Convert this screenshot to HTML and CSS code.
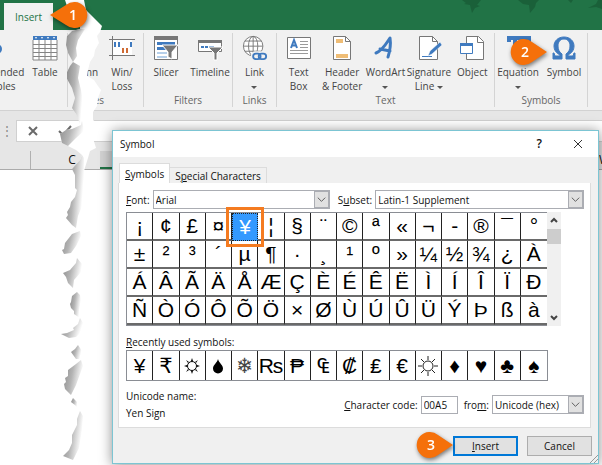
FILE: index.html
```html
<!DOCTYPE html>
<html lang="en">
<head>
    <meta charset="UTF-8">
    <meta name="viewport" content="width=device-width, initial-scale=1.0">
    <title>Insert Symbol</title>
    <link rel="stylesheet" href="styles.css">
</head>
<body>
    <div class="app">
        <header class="title-bar">
            <button class="ribbon-tab">Insert</button>
            <svg class="leaves" width="150" height="16" viewBox="0 0 150 16">
                <path d="M10 0l4 3-2 1 6 1 2 8 3-5 5-2-3-1 4-5zM66 0l5 4 6 1 1 8 5-6 1-4 3-3zM116 0l3 3 2-3zM136 8l8-4 2-4h4v9l-6-2z"/>
            </svg>
        </header>

        <div class="ribbon">
            <div class="ribbon-left">
                <div class="group tables">
                    <div class="tools">
                        <button class="tool wide">
                            <svg width="26" height="26" viewBox="0 0 26 26"><circle cx="21" cy="14" r="5" fill="#3f7abf"/></svg>
                            <span>Recommended<br>PivotTables</span>
                        </button>
                        <button class="tool">
                            <svg width="26" height="26" viewBox="0 0 26 26">
                                <path d="M1 1h24v24H1z" fill="#fff"/>
                                <path d="M1 1h24v4H1z" fill="#3f7abf"/>
                                <path d="M1 5v20h24V5M1 9.500h24M1 13.500h24M1 17.500h24M1 21.500h24M7 5v20M13 5v20M19 5v20" fill="none" stroke="#858585"/>
                                <path d="M3 2h2l-1 2zM9 2h2l-1 2zM15 2h2l-1 2zM21 2h2l-1 2z" fill="#fff"/>
                            </svg>
                            <span>Table</span>
                        </button>
                    </div>
                </div>
            </div>
            <div class="ribbon-right">
                <div class="group sparklines">
                    <div class="tools">
                        <button class="tool"><svg width="26" height="26"></svg><span>Column</span></button>
                        <button class="tool">
                            <svg width="26" height="26" viewBox="0 0 26 26">
                                <path d="M4 5h19v15H4z" fill="#fff"/>
                                <path d="M3.500 1v24M0 4.500h26M0 20.500h26" stroke="#777" fill="none"/>
                                <path d="M5 7h2v5H5zM9 7h2v5H9zM21 7h2v5h-2z" fill="#3f7abf"/>
                                <path d="M13 13h2v5h-2zM17 13h2v5h-2z" fill="#cf6a33"/>
                            </svg>
                            <span>Win/<br>Loss</span>
                        </button>
                    </div>
                    <div class="group-name">Sparklines</div>
                </div>
                <div class="group filters">
                    <div class="tools">
                        <button class="tool">
                            <svg width="26" height="26" viewBox="0 0 26 26">
                                <path d="M1.500 1.500h23v23h-23z" fill="#fff" stroke="#777"/>
                                <path d="M1 1h24v4H1z" fill="#777"/>
                                <path d="M4 7h18v3H4zM4 12h9v3H4z" fill="#3f7abf"/>
                                <path d="M4 17h10v2H4zM4 21h10v2H4z" fill="#b5cfea"/>
                                <path d="M9 10h16l-6 7v7l-4-2v-5z" fill="#777" stroke="#fff"/>
                            </svg>
                            <span>Slicer</span>
                        </button>
                        <button class="tool">
                            <svg width="26" height="26" viewBox="0 0 26 26">
                                <path d="M1.500 5.500h23v11h-23z" fill="#fff" stroke="#777"/>
                                <path d="M1 5h24v3H1z" fill="#777"/>
                                <path d="M4 11h3v2H4zM8 11h3v2H8zM12 11h5v2h-5z" fill="#3f7abf"/>
                                <path d="M11 12h15l-6 6v7h-3v-7z" fill="#777" stroke="#fff"/>
                            </svg>
                            <span>Timeline</span>
                        </button>
                    </div>
                    <div class="group-name">Filters</div>
                </div>
                <div class="group links">
                    <div class="tools">
                        <button class="tool">
                            <svg width="28" height="28" viewBox="0 0 28 28">
                                <g fill="none" stroke="#777">
                                    <circle cx="12" cy="12" r="10.500" fill="#fff"/>
                                    <ellipse cx="12" cy="12" rx="5" ry="10.500"/>
                                    <path d="M12 1.500v21M1.500 12h21M3 6.500h18M3 17.500h18"/>
                                </g>
                                <g fill="none" stroke="#f1f1f1" stroke-width="5"><rect x="12" y="20" width="8" height="5" rx="2.500"/><rect x="18" y="20" width="8" height="5" rx="2.500"/></g>
                                <g fill="none" stroke="#3f7abf" stroke-width="2"><rect x="12" y="20" width="8" height="6" rx="3"/><rect x="18" y="20" width="8" height="6" rx="3"/></g>
                            </svg>
                            <span>Link<br><i class="caret"></i></span>
                        </button>
                    </div>
                    <div class="group-name">Links</div>
                </div>
                <div class="group text">
                    <div class="tools">
                        <button class="tool">
                            <svg width="26" height="26" viewBox="0 0 26 26">
                                <path d="M1.500 2.500h23v21h-23z" fill="#fff" stroke="#777"/>
                                <path d="M14 6.500h8M14 9.500h8M14 12.500h8M4 15.500h18M4 18.500h18" stroke="#9a9a9a"/>
                                <path d="M5 13l3-8 3 8M6 10.500h4" fill="none" stroke="#3f7abf" stroke-width="2"/>
                            </svg>
                            <span>Text<br>Box</span>
                        </button>
                        <button class="tool">
                            <svg width="26" height="26" viewBox="0 0 26 26">
                                <path d="M4.500 1.500h12l5 5v18h-17z" fill="#fff" stroke="#777"/>
                                <path d="M16.500 1.500v5h5" fill="none" stroke="#777"/>
                                <path d="M7 4h7v4H7zM7 19h12v4H7z" fill="#efbd76"/>
                            </svg>
                            <span>Header<br>&amp; Footer</span>
                        </button>
                        <button class="tool">
                            <svg width="26" height="26" viewBox="0 0 26 26">
                                <path d="M4 18C10 16 14 9 18 3c1 7 0 13-2 19M8 14l10 2" fill="none" stroke="#3f7abf" stroke-width="3" stroke-linecap="round" stroke-linejoin="round"/>
                            </svg>
                            <span>WordArt<br><i class="caret"></i></span>
                        </button>
                        <button class="tool">
                            <svg width="26" height="26" viewBox="0 0 26 26">
                                <path d="M3.500 1.500h13l5 5v18h-18z" fill="#fff" stroke="#777"/>
                                <path d="M16.500 1.500v5h5" fill="none" stroke="#777"/>
                                <path d="M6 21.500h10" stroke="#3f7abf"/>
                                <path d="M12 21l2-5L24 7l2 3-10 9z" fill="#3f7abf" stroke="#fff" stroke-width=".5"/>
                            </svg>
                            <span>Signature<br>Line <i class="caret"></i></span>
                        </button>
                        <button class="tool">
                            <svg width="26" height="26" viewBox="0 0 26 26">
                                <path d="M7.500 1.500h12l5 5v18h-17z" fill="#fff" stroke="#777"/>
                                <path d="M18.500 1.500v6h6" fill="none" stroke="#777"/>
                                <path d="M1.500 8.500h12v10h-12z" fill="#fff" stroke="#3f7abf"/>
                                <path d="M1 8h13v3H1z" fill="#3f7abf"/>
                            </svg>
                            <span>Object</span>
                        </button>
                    </div>
                    <div class="group-name">Text</div>
                </div>
                <div class="group symbols">
                    <div class="tools">
                        <button class="tool">
                            <svg width="26" height="26" viewBox="0 0 26 26"><path d="M4 7V3h21v4M10 3v20M19 3v20" fill="none" stroke="#3f7abf" stroke-width="4"/></svg>
                            <span>Equation<br><i class="caret"></i></span>
                        </button>
                        <button class="tool">
                            <svg width="26" height="26" viewBox="0 0 26 26">
                                <path d="M2 18h1l1 3h5v-1C5 18 3 15 3 11 3 6 7 2 13 2s10 4 10 9c0 4-2 7-6 9v1h5l1-3h1v6h-9v-5c3-2 4-5 4-8 0-4-2-7-6-7s-6 3-6 7c0 3 1 6 4 8v5H2z" fill="#3f7abf" stroke="#3f7abf"/>
                            </svg>
                            <span>Symbol</span>
                        </button>
                    </div>
                    <div class="group-name">Symbols</div>
                    <svg class="callout callout-two" width="42" height="34" viewBox="0 0 42 34">
                        <path d="M38 16L23 6A13 13 0 1 0 23 26z"/>
                        <text x="16" y="21">2</text>
                    </svg>
                </div>
            </div>
        </div>

        <div class="formula-row">
            <span class="grip">⋮</span>
            <div class="formula-box">
                <svg width="60" height="14" viewBox="0 0 60 14" fill="none" stroke="#6a6a6a" stroke-width="2">
                    <path d="M2 3l8 8M10 3l-8 8M32 7l4 4 8-9"/>
                </svg>
            </div>
        </div>

        <div class="columns">
            <span class="col-b"></span>
            <span class="col-c">C</span>
            <span class="col-d"></span>
            <span class="col-rest">W</span>
        </div>
        <main class="sheet"></main>

        <svg class="tear" width="110" height="465" viewBox="0 0 110 465">
            <defs>
                <linearGradient id="shade" x1="0" y1="0" x2="1" y2=".3">
                    <stop offset="0" stop-color="#8c8c8c"/>
                    <stop offset=".5" stop-color="#b4b4b4"/>
                    <stop offset="1" stop-color="#fff"/>
                </linearGradient>
            </defs>
            <path fill="#fff" d="M65 0L67 6 72 10 80 12 80 29 72 31 67 36 66 45 68 53 73 62 70 66 67 72 67 79 72 88 75 98 72 108 76 114 81 124 72 129 66 130 60 134 62 143 76 150 82 155 80 160 72 169 84 171 88 158 90 151 96 148 93 138 105 131 104 128 93 120 93 112 97 106 98 98 101 90 98 86 94 80 87 76 88 70 90 62 94 56 95 50 99 43 97 36 100 32 102 26 94 18 86 10 84 0z"/>
            <g fill="url(#shade)">
                <path d="M80 29L72 31 67 36 66 45 68 53 73 62 77 56 76 48 78 40 85 29z"/>
                <path d="M73 62L70 66 67 72 67 79 72 88 75 98 72 108 76 114 80 124 84 118 83 102 81 90 78 78 80 66z"/>
                <path d="M82 121L81 125 72 129 66 130 60 134 62 143 68 146 76 138 84 131z"/>
                <path d="M82 155L80 160 72 169 75 175 75 188 77 190 75 197 71 202 70 207 67 212 68 215 66 218 72 225 76 228 78 216 83 204 84 180 84 158z"/>
                <path d="M80 231L72 234 65 243 64 249 62 250 64 254 71 253 76 246 81 236z"/>
                <path d="M77 258L76 263 70 270 63 273 66 277 68 283 73 288 74 280 81 272 82 264z"/>
                <path d="M77 292L72 296 71 302 70 304 71 308 74 311 74 314 80 318 79 310 81 301 80 295z"/>
                <path d="M80 318L78 324 73 328 74 330 67 333 61 334 69 338 76 337 82 331 83 323z"/>
                <path d="M78 345L75 349 71 352 76 359 80 359 82 351z"/>
                <path d="M81 360L76 364 68 370 68 376 65 378 66 382 64 384 65 389 71 395 76 385 80 374 83 366z"/>
                <path d="M73 398L71 402 75 405 78 408 77 402z"/>
                <path d="M80 411L77 419 77 425 72 435 72 443 69 450 63 456 73 460 79 448 82 430 83 416z"/>
            </g>
        </svg>
        <svg class="callout callout-one" width="42" height="34" viewBox="0 0 42 34">
            <path d="M2 16L18 6A13 13 0 1 1 18 26z"/>
            <text x="25" y="21">1</text>
        </svg>
    </div>

    <section class="dialog">
        <div class="dialog-title">
            <h1>Symbol</h1>
            <button class="help">?</button>
            <button class="close" aria-label="Close">
                <svg width="10" height="10" viewBox="0 0 10 10"><path d="M1 1l8 8M9 1l-8 8" stroke="#333" fill="none"/></svg>
            </button>
        </div>
        <div class="tabs">
            <button class="tab active"><u>S</u>ymbols</button>
            <button class="tab">S<u>p</u>ecial Characters</button>
        </div>
        <div class="panel">
            <div class="font-row">
                <label for="font"><u>F</u>ont:</label>
                <span class="combo combo-font">
                    <select id="font"><option>Arial</option></select>
                    <svg viewBox="0 0 14 16"><path d="M3 6l4 4 4-4"/></svg>
                </span>
                <label for="subset">S<u>u</u>bset:</label>
                <span class="combo combo-subset">
                    <select id="subset"><option>Latin-1 Supplement</option></select>
                    <svg viewBox="0 0 14 16"><path d="M3 6l4 4 4-4"/></svg>
                </span>
            </div>
            <div class="symbol-area">
                <div class="grid">
                    <button>¡</button><button>¢</button><button>£</button><button>¤</button><button class="selected">¥</button><button>¦</button><button>§</button><button>¨</button><button>©</button><button>ª</button><button>«</button><button>¬</button><button>-</button><button>®</button><button>¯</button><button>°</button>
                    <button>±</button><button>²</button><button>³</button><button>´</button><button>µ</button><button>¶</button><button>·</button><button>¸</button><button>¹</button><button>º</button><button>»</button><button>¼</button><button>½</button><button>¾</button><button>¿</button><button>À</button>
                    <button>Á</button><button>Â</button><button>Ã</button><button>Ä</button><button>Å</button><button>Æ</button><button>Ç</button><button>È</button><button>É</button><button>Ê</button><button>Ë</button><button>Ì</button><button>Í</button><button>Î</button><button>Ï</button><button>Ð</button>
                    <button>Ñ</button><button>Ò</button><button>Ó</button><button>Ô</button><button>Õ</button><button>Ö</button><button>×</button><button>Ø</button><button>Ù</button><button>Ú</button><button>Û</button><button>Ü</button><button>Ý</button><button>Þ</button><button>ß</button><button>à</button>
                </div>
                <div class="scrollbar">
                    <svg width="8" height="6" viewBox="0 0 8 6"><path d="M1 5l3-3 3 3"/></svg>
                    <div class="thumb"></div>
                    <svg width="8" height="6" viewBox="0 0 8 6"><path d="M1 1l3 3 3-3"/></svg>
                </div>
            </div>
            <div class="recent-label"><u>R</u>ecently used symbols:</div>
            <div class="grid recent">
                <button>¥</button><button>₹</button>
                <button aria-label="Sun">
                    <svg width="16" height="16" viewBox="0 0 16 16"><circle cx="8" cy="8" r="4.500" fill="none" stroke="#000"/><path d="M7 3l1-3 1 3zM7 13l1 3 1-3zM3 7L0 8l3 1zM13 7l3 1-3 1zM4 5L2 2l3 2zM11 4l3-2-2 3zM4 11l-2 3 3-2zM12 11l2 3-3-2z"/></svg>
                </button>
                <button aria-label="Drop">
                    <svg width="12" height="16" viewBox="0 0 12 16"><path d="M6 1c1 4 5 6 5 9.500a5 5 0 0 1-10 0C1 7 5 5 6 1z"/></svg>
                </button>
                <button class="flake">❄</button><button>₨</button><button>₱</button><button>₠</button><button>₡</button><button>₤</button><button>€</button>
                <button aria-label="Sun with rays">
                    <svg width="20" height="20" viewBox="0 0 20 20" fill="none" stroke="#222"><circle cx="10" cy="10" r="5"/><path d="M10 0v4M10 16v4M0 10h4M16 10h4M3 3l3 3M14 14l3 3M3 17l3-3M14 6l3-3"/></svg>
                </button>
                <button>♦</button><button>♥</button><button>♣</button><button>♠</button>
            </div>
            <div class="info-row">
                <div class="unicode">
                    <div>Unicode name:</div>
                    <div>Yen Sign</div>
                </div>
                <label for="code"><u>C</u>haracter code:</label>
                <input class="code" id="code" type="text" value="00A5">
                <label for="from">fro<u>m</u>:</label>
                <span class="combo combo-from">
                    <select id="from"><option>Unicode (hex)</option></select>
                    <svg viewBox="0 0 14 16"><path d="M3 6l4 4 4-4"/></svg>
                </span>
            </div>
        </div>
        <div class="actions">
            <svg class="callout" width="42" height="34" viewBox="0 0 42 34">
                <path d="M38 16L23 6A13 13 0 1 0 23 26z"/>
                <text x="16" y="21">3</text>
            </svg>
            <button class="action primary"><u>I</u>nsert</button>
            <button class="action">Cancel</button>
        </div>
        <svg class="resize" width="9" height="9" viewBox="0 0 9 9"><path d="M1 9l8-8M5 9l4-4" stroke="#999" fill="none"/></svg>
    </section>
</body>
</html>
```
FILE: styles.css
```css
* {
    box-sizing: border-box;
}
body {
    margin: 0;
    font-family: "Open Sans", "Noto Sans", sans-serif;
    font-size: 10px;
    line-height: 14px;
    color: #111;
    background-color: #fff;
    overflow: hidden;
}
button, input, select {
    margin: 0;
    padding: 0;
    border: none;
    border-radius: 0;
    background: none;
    font: inherit;
    color: inherit;
}
.app {
    position: relative;
    display: flex;
    flex-direction: column;
    min-height: 100vh;
}

/* title bar and ribbon */
.title-bar {
    display: flex;
    justify-content: space-between;
    align-items: flex-start;
    height: 30px;
    padding: 3px 0 0 4px;
    background-color: #217346;
}
.ribbon-tab {
    width: 49px;
    height: 27px;
    background-color: #f1f1f1;
    color: #217346;
}
.leaves {
    margin-top: -3px;
    fill: #1a6039;
}
.ribbon {
    display: flex;
    height: 81px;
    background-color: #f1f1f1;
    border-bottom: 1px solid #d2d2d2;
    color: #444;
}
.ribbon-left {
    flex: none;
    display: flex;
    width: 84px;
    overflow: hidden;
}
.ribbon-right {
    flex: 1;
    display: flex;
    overflow: hidden;
}
.group {
    position: relative;
    flex: none;
    display: flex;
    flex-direction: column;
    justify-content: space-between;
    margin: 3px 0;
    padding-top: 2px;
    border-right: 1px solid #d4d4d4;
}
.tables {
    width: 68px;
}
.sparklines {
    width: 127px;
    margin-left: -67px;
}
.sparklines .tools {
    padding-left: 42px;
}
.filters {
    width: 89px;
}
.links {
    width: 44px;
}
.text {
    width: 218px;
}
.symbols {
    width: 93px;
}
.tools {
    display: flex;
    justify-content: flex-end;
}
.tool {
    flex: 1 0 0;
    min-width: 0;
    display: flex;
    flex-direction: column;
    align-items: center;
    gap: 4px;
    white-space: nowrap;
}
.tool svg {
    flex: none;
    height: 26px;
}
.tables .tool {
    flex: none;
    width: 44px;
}
.tables .wide {
    width: 68px;
}
.caret {
    display: inline-block;
    vertical-align: middle;
    border: 3px solid transparent;
    border-top-color: #555;
    border-bottom: none;
}
.group-name {
    text-align: center;
    color: #666;
}

/* formula bar and column headings */
.formula-row {
    display: flex;
    height: 40px;
    padding: 9px 0;
    background-color: #e6e6e6;
}
.grip {
    width: 16px;
    padding-left: 1px;
    line-height: 22px;
    font-size: 12px;
    color: #888;
}
.formula-box {
    flex: 1;
    display: flex;
    align-items: center;
    padding-left: 10px;
    background-color: #fff;
    border: 1px solid #d0d0d0;
    border-right: none;
}
.columns {
    display: flex;
    height: 19px;
    background-color: #e6e6e6;
    border-bottom: 1px solid #ababab;
    font-size: 12px;
    line-height: 18px;
    text-align: center;
}
.col-b {
    width: 31px;
    border-right: 1px solid #b0b0b0;
}
.col-c {
    width: 69px;
    padding-left: 13px;
}
.col-d {
    width: 64px;
    background-color: #d2d2d2;
    border-bottom: 2px solid #217346;
}
.col-rest {
    flex: 1;
    margin-right: -8px;
    text-align: right;
}
.sheet {
    flex: 1;
    background-color: #fff;
}
.tear {
    position: absolute;
    left: 0;
    top: 0;
}

/* numbered callouts */
.callout {
    fill: #f5700a;
    filter: drop-shadow(1px 2px 2px rgba(0,0,0,0.5));
}
.callout text {
    fill: #fff;
    font-size: 14px;
    font-weight: 600;
    text-anchor: middle;
}
.callout-one {
    position: absolute;
    left: 48px;
    top: -1px;
}
.callout-two {
    position: absolute;
    left: 14px;
    top: 3px;
}

/* symbol dialog */
.dialog {
    position: absolute;
    left: 112px;
    right: 3px;
    top: 130px;
    background-color: #f0f0f0;
    border: 1px solid #7cc5d3;
    box-shadow: 0 1px 12px rgba(0,0,0,0.45);
}
.dialog-title {
    display: flex;
    align-items: center;
    height: 26px;
    padding: 0 15px 0 7px;
    background-color: #fff;
}
.dialog-title h1 {
    flex: 1;
    margin: 0;
    font-size: 10px;
    font-weight: normal;
}
.help {
    margin-right: 31px;
    font-size: 12px;
    font-weight: 600;
}
.close {
    display: flex;
}
.tabs {
    display: flex;
    align-items: flex-end;
    height: 26px;
    padding-left: 6px;
}
.tab {
    height: 16px;
    padding: 0 5px;
    background-color: #f0f0f0;
    border: 1px solid #dcdcdc;
    border-bottom: none;
    border-left: none;
}
.tab.active {
    height: 20px;
    background-color: #fff;
    border-left: 1px solid #dcdcdc;
}
.panel {
    margin: 0 7px 0 5px;
    padding: 7px 6px 7px 7px;
    background-color: #fff;
    border: 1px solid #dcdcdc;
    border-top: none;
}
.font-row {
    display: flex;
    align-items: center;
    gap: 3px;
}
.combo {
    position: relative;
    height: 19px;
    border: 1px solid #abadb3;
    background-color: #fff;
}
.combo select {
    width: 100%;
    height: 17px;
    padding-left: 2px;
    appearance: none;
}
.combo svg {
    position: absolute;
    right: 0;
    top: 0;
    width: 15px;
    height: 17px;
    background-color: #e1e1e1;
    border: 1px solid #abadb3;
    fill: none;
    stroke: #555;
}
.combo-font {
    flex: 178;
    margin-right: 5px;
}
.combo-subset {
    flex: 210;
}
.symbol-area {
    display: flex;
    margin: 3px 23px 0 0;
}
.grid {
    flex: 1;
    display: grid;
    grid-template-columns: repeat(16, minmax(0, 1fr));
    grid-auto-rows: 28px;
    border: 1px solid #8a8d94;
    border-right: none;
    font-family: "Liberation Sans", "DejaVu Sans", sans-serif;
    font-size: 21px;
    line-height: 26px;
    color: #000;
}
.grid button {
    display: flex;
    justify-content: center;
    align-items: center;
    border-right: 1px solid #222;
    border-bottom: 2px solid #6a6a6a;
}
.grid button:nth-child(16n) {
    border-right: none;
}
.grid .selected {
    background-color: #3399ff;
    color: #fff;
    border: 1px dotted #222;
    outline: 3px solid #f47b20;
    outline-offset: 3px;
    z-index: 1;
}
.scrollbar {
    display: flex;
    flex-direction: column;
    align-items: center;
    width: 14px;
    padding: 5px 0;
    background-color: #f0f0f0;
}
.scrollbar path {
    fill: none;
    stroke: #444;
    stroke-width: 2;
}
.thumb {
    width: 100%;
    height: 15px;
    margin: 6px 0 auto;
    background-color: #cdcdcd;
}
.recent-label {
    margin: 9px 0 1px;
}
.recent {
    grid-auto-rows: 29px;
    margin-right: 36px;
    border-right: 1px solid #8a8d94;
}
.recent.grid button {
    border-bottom: none;
}
.recent .flake {
    color: #444;
}
.info-row {
    display: flex;
    align-items: center;
    gap: 3px;
    margin-top: 8px;
}
.unicode {
    flex: 1;
    display: flex;
    flex-direction: column;
    gap: 3px;
}
.code {
    width: 37px;
    height: 18px;
    margin-right: 3px;
    padding-left: 2px;
    border: 1px solid #abadb3;
}
.combo-from {
    width: 92px;
}
.actions {
    display: flex;
    align-items: center;
    justify-content: flex-end;
    gap: 9px;
    height: 35px;
    padding-right: 6px;
}
.action {
    width: 65px;
    height: 20px;
    background-color: #e1e1e1;
    border: 1px solid #adadad;
}
.primary {
    border: 2px solid #0078d7;
}
.actions .callout {
    margin-right: -13px;
    z-index: 1;
}
.resize {
    position: absolute;
    right: 0;
    bottom: 0;
}
```
